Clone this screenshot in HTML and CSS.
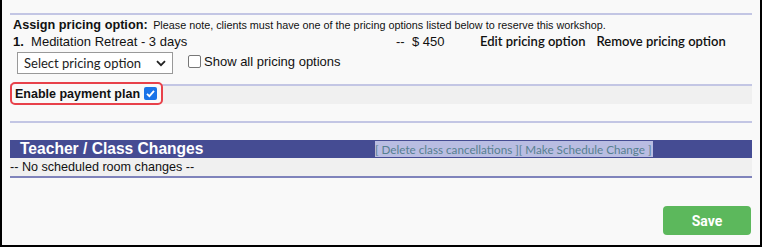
FILE: index.html
```html
<!DOCTYPE html>
<html lang="en">
<head>
    <meta charset="UTF-8">
    <title>Workshop pricing</title>
    <link rel="stylesheet" href="styles.css">
</head>
<body>
    <div class="frame">
        <div class="rule"></div>
        <div class="assign">
            <b>Assign pricing option:</b>
            <span class="note">Please note, clients must have one of the pricing options listed below to reserve this workshop.</span>
        </div>
        <div class="option-row">
            <span class="option-name"><b>1.</b>&nbsp; Meditation Retreat - 3 days</span>
            <span class="price">-- &nbsp;$ 450</span>
            <a class="action">Edit pricing option</a>
            <a class="action">Remove pricing option</a>
        </div>
        <div class="select-row">
            <div class="select">
                <span>Select pricing option</span>
                <svg width="10" height="7" viewBox="0 0 10 7"><path d="M1 1.2 L5 5.2 L9 1.2" fill="none" stroke="#222" stroke-width="1.8"/></svg>
            </div>
            <label class="show-all"><span class="box"></span>Show all pricing options</label>
        </div>
        <div class="plan-row">
            <div class="plan-box">
                <b>Enable payment plan</b>
                <span class="checked">
                    <svg width="13" height="13" viewBox="0 0 13 13"><path d="M3 6.8 L5.4 9.2 L10 3.8" fill="none" stroke="#fff" stroke-width="1.8"/></svg>
                </span>
            </div>
        </div>
        <div class="rule rule-mid"></div>
        <div class="changes-head">
            <span class="changes-title">Teacher / Class Changes</span>
            <span class="changes-links">[ Delete class cancellations ][ Make Schedule Change ]</span>
        </div>
        <div class="changes-body">-- No scheduled room changes --</div>
        <div class="changes-rule"></div>
        <div class="footer">
            <button class="save">Save</button>
        </div>
    </div>
</body>
</html>
```

FILE: styles.css
```css
body {
    margin: 0;
    background-color: #fff;
    font-family: "Liberation Sans", Arial, sans-serif;
    color: #111;
}

.frame {
    width: 762px;
    height: 247px;
    box-sizing: border-box;
    border-left: 2px solid #000;
    border-right: 2px solid #000;
    border-bottom: 2px solid #000;
    background-color: #f9f9f9;
    padding: 13px 8px 0 8px;
}

.rule {
    height: 2px;
    background-color: #c3c6e4;
}

.assign {
    margin-top: 3px;
    padding-left: 3px;
    font-size: 12.7px;
    line-height: 15px;
}

.note {
    font-size: 10.8px;
    margin-left: 2px;
}

.option-row {
    display: flex;
    align-items: baseline;
    padding-left: 3px;
    font-size: 13px;
    line-height: 16px;
    margin-top: 0;
}

.option-name {
    width: 383px;
}

.price {
    width: 84px;
}

.action {
    font-family: Lato, sans-serif;
    font-size: 13px;
    font-weight: 600;
    color: #111;
    margin-right: 11px;
}

.select-row {
    display: flex;
    align-items: center;
    height: 22px;
    padding-left: 7px;
    margin-top: 2px;
}

.select {
    width: 156px;
    height: 22px;
    box-sizing: border-box;
    border: 1px solid #999;
    background-color: #fff;
    display: flex;
    align-items: center;
    justify-content: space-between;
    padding: 0 6px 0 6px;
    font-family: Lato, sans-serif;
    font-size: 13px;
    color: #222;
}

.show-all {
    display: flex;
    align-items: center;
    margin-left: 15px;
    font-size: 13px;
    margin-top: -3px;
}

.box {
    width: 11px;
    height: 11px;
    border: 1px solid #777;
    border-radius: 2px;
    background-color: #fff;
    margin-right: 3px;
}

.plan-row {
    margin-top: 10px;
    border-top: 2px solid #c3c6e4;
    background-color: #f0f0f0;
    height: 18px;
    position: relative;
}

.plan-box {
    position: absolute;
    left: 0;
    top: -4px;
    height: 23px;
    box-sizing: border-box;
    border: 2px solid #e8414a;
    border-radius: 5px;
    background-color: #f9f9f9;
    display: flex;
    align-items: center;
    padding: 0 4px 0 3px;
    font-size: 12.5px;
    white-space: nowrap;
}

.checked {
    display: inline-flex;
    width: 13px;
    height: 13px;
    margin-left: 4px;
    border-radius: 2px;
    background-color: #1a73e8;
}

.rule-mid {
    margin-top: 17px;
}

.changes-head {
    margin-top: 17px;
    height: 18px;
    background-color: #454c93;
    display: flex;
    align-items: center;
}

.changes-title {
    color: #fff;
    font-weight: bold;
    font-size: 15.6px;
    margin-left: 10px;
    width: 355px;
}

.changes-links {
    font-family: Lato, sans-serif;
    font-size: 11.7px;
    color: #568090;
    background-color: #b9bde2;
    line-height: 16px;
    padding-right: 1px;
}

.changes-body {
    background-color: #f0f0f0;
    font-size: 12.6px;
    line-height: 18px;
    height: 18px;
}

.changes-rule {
    height: 2px;
    background-color: #7f83bb;
}

.footer {
    display: flex;
    justify-content: flex-end;
    margin-top: 28px;
    padding-right: 1px;
}

.save {
    width: 88px;
    height: 29px;
    border: none;
    border-radius: 4px;
    background-color: #5cb85c;
    color: #fff;
    font-family: Roboto, sans-serif;
    font-weight: bold;
    font-size: 14px;
}
```
